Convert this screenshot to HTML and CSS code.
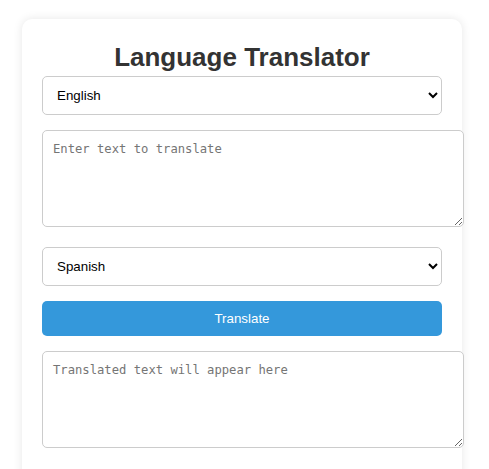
FILE: index.html
```html
<!DOCTYPE html>
<html lang="en">
<head>
    <meta charset="UTF-8">
    <meta name="viewport" content="width=device-width, initial-scale=1.0">
    <title>Language Translator</title>
    <link rel="stylesheet" href="styles.css">
</head>
<body>
    <div class="container">
        <h1>Language Translator</h1>
        <select id="sourceLang" class="lang-select">
            <option value="en" selected>English</option>
            <option value="es">Spanish</option>
            <option value="fr">French</option>
            <option value="de">German</option>
        </select>
        <textarea id="inputText" placeholder="Enter text to translate"></textarea>
        <select id="targetLang" class="lang-select">
            <option value="en">English</option>
            <option value="es" selected>Spanish</option>
            <option value="fr">French</option>
            <option value="de">German</option>
        </select>
        <button class="translate-button">Translate</button>
        <textarea id="outputText" placeholder="Translated text will appear here" readonly></textarea>
    </div>
</body>
</html>
```

FILE: styles.css
```css
body {
    margin: 0;
    padding: 19px 22px;
    background-color: #ffffff;
    font-family: "Liberation Sans", Arial, sans-serif;
}

.container {
    width: 400px;
    padding: 20px;
    background: white;
    border-radius: 10px;
    box-shadow: 0 0 10px rgba(0,0,0,0.1);
}

h1 {
    font-size: 26px;
    font-weight: bold;
    color: #333;
    text-align: center;
    margin: 3px 0 3px 0;
}

.lang-select {
    display: block;
    width: 100%;
    padding: 10px;
    margin-bottom: 15px;
    font-family: "Liberation Sans", Arial, sans-serif;
    font-size: 13.33px;
    color: #000;
    background: white;
    border: 1px solid #ccc;
    border-radius: 5px;
}

textarea {
    display: block;
    width: 100%;
    height: 75px;
    padding: 10px;
    margin: 0 0 20px 0;
    font-family: "DejaVu Sans Mono", monospace;
    font-size: 12.2px;
    line-height: 1.4;
    border: 1px solid #ccc;
    border-radius: 5px;
}

textarea::placeholder {
    color: #757575;
}

.translate-button {
    display: block;
    width: 100%;
    padding: 10px;
    margin-bottom: 15px;
    font-family: "Liberation Sans", Arial, sans-serif;
    font-size: 13.33px;
    color: white;
    background-color: #3498db;
    border: none;
    border-radius: 5px;
    cursor: pointer;
}
```
